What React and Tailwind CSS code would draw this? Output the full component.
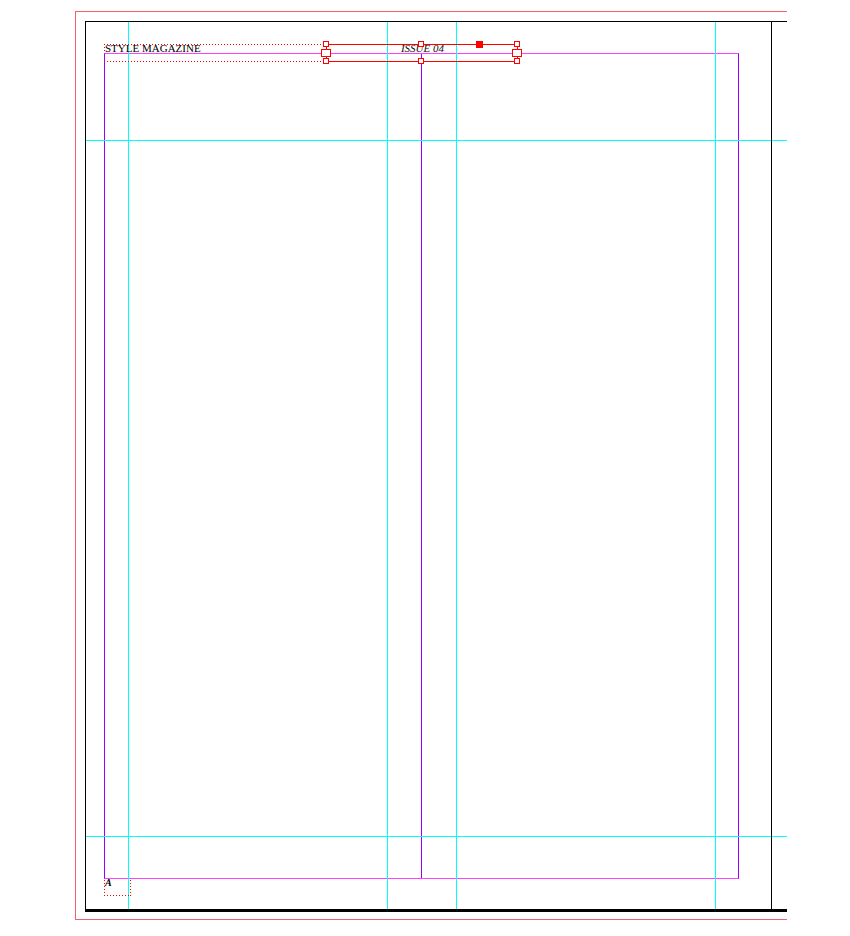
import React from 'react'

const serif = { fontFamily: '"Liberation Serif", "Times New Roman", serif' }

// small white handle with red border, centred on (x, y) of its frame
function Handle({ x, y, w = 6, h = 6, filled = false }) {
    return (
        <div
            className={`absolute border border-[#ff0000] ${filled ? 'bg-[#ff0000]' : 'bg-white'}`}
            style={{ left: x - 1 - w / 2, top: y - 1 - h / 2, width: w, height: h }}
        />
    )
}

// dotted edge of an unselected frame
function Dotted({ side, length }) {
    const horizontal = side === 'top' || side === 'bottom'
    const pos = {
        top: 'left-0 top-0',
        bottom: 'left-0 bottom-0',
        left: 'left-0 top-0',
        right: 'right-0 top-0',
    }[side]
    return (
        <svg
            className={`absolute ${pos}`}
            width={horizontal ? length : 1}
            height={horizontal ? 1 : length}
        >
            <line
                x1={horizontal ? 0 : 0.5}
                y1={horizontal ? 0.5 : 0}
                x2={horizontal ? length : 0.5}
                y2={horizontal ? 0.5 : length}
                stroke="#ff0000"
                strokeWidth="1"
                strokeDasharray="1 2"
            />
        </svg>
    )
}

function Guide({ vertical, at }) {
    return vertical ? (
        <div className="absolute top-0 w-px h-[887px] bg-[#00ffff]" style={{ left: at }} />
    ) : (
        <div className="absolute left-0 w-[701px] h-px bg-[#00ffff]" style={{ top: at }} />
    )
}

export default function App() {
    return (
        <div className="w-[850px] h-[936px] bg-white">
            {/* pasteboard, clipped at the right */}
            <div className="w-[787px] h-[936px] overflow-hidden pl-[75px] pt-[11px]">

                {/* bleed */}
                <div className="w-[800px] h-[909px] border border-[#f2606c] pl-[9px] pt-[9px]">

                    {/* page */}
                    <div className="relative w-[800px] h-[891px] border-l border-t border-b-[3px] border-black pl-[18px] pt-[31px]">

                        {/* margins + column guide */}
                        <div className="grid grid-cols-[317px_1fr] w-[635px] h-[826px] border-x border-x-[#9a00ff] border-y border-y-[#ff40ff]">
                            <div className="border-r border-[#9a00ff]" />
                            <div />
                        </div>

                        {/* ruler guides */}
                        <Guide at={118} />
                        <Guide at={814} />
                        <Guide vertical at={42} />
                        <Guide vertical at={301} />
                        <Guide vertical at={370} />
                        <Guide vertical at={629} />

                        {/* spread edge */}
                        <div className="absolute left-[685px] top-0 w-px h-[887px] bg-black" />

                        {/* header frames */}
                        <div className="absolute left-[18px] top-[22px] flex">
                            <div className="relative w-[222px] h-[18px]">
                                <Dotted side="top" length={220} />
                                <Dotted side="bottom" length={220} />
                                <Dotted side="left" length={7} />
                                <span className="block -mt-[2px] pl-px text-[11px] leading-[13px] text-black" style={serif}>
                                    STYLE MAGAZINE
                                </span>
                            </div>

                            <div className="relative w-[192px] h-[18px] border border-[#ff0000] flex justify-center">
                                <span className="-mt-[3px] pl-[1px] text-[11px] leading-[13px] italic text-[#111]" style={serif}>
                                    ISSUE 04
                                </span>
                                <Handle x={0} y={0} />
                                <Handle x={95} y={0} />
                                <Handle x={191} y={0} />
                                <Handle x={0} y={17} />
                                <Handle x={95} y={17} />
                                <Handle x={191} y={17} />
                                <Handle x={0} y={9} w={10} h={8} />
                                <Handle x={191} y={9} w={10} h={8} />
                                <Handle x={153} y={0} w={7} h={7} filled />
                            </div>
                        </div>

                        {/* folio frame */}
                        <div className="absolute left-[18px] top-[858px] w-[27px] h-[16px]">
                            <Dotted side="left" length={16} />
                            <Dotted side="right" length={16} />
                            <Dotted side="bottom" length={27} />
                            <span className="block -mt-[2px] pl-px text-[10px] leading-[10px] italic font-bold text-black" style={serif}>
                                A
                            </span>
                        </div>
                    </div>
                </div>
            </div>
        </div>
    )
}
